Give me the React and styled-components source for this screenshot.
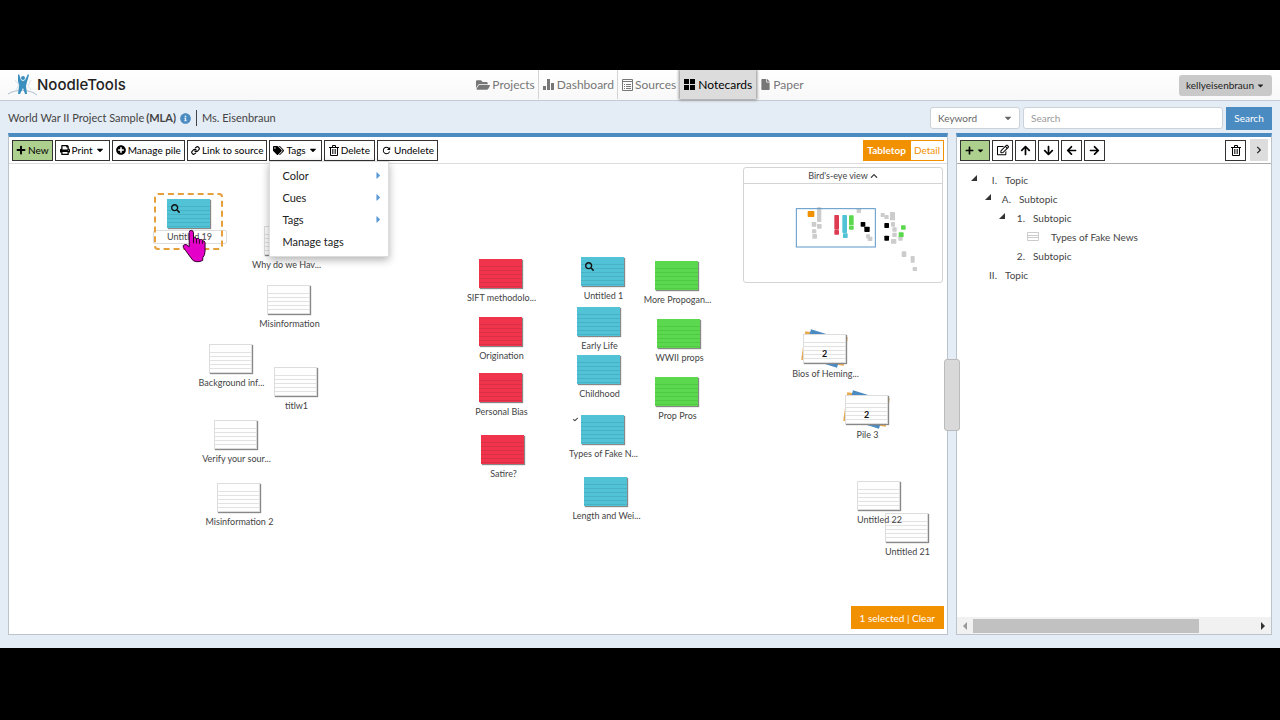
import React from "react";
import styled, { createGlobalStyle, css } from "styled-components";
import { FaPlus, FaPrint, FaPlusCircle, FaTags, FaFolderOpen, FaFile, FaInfoCircle, FaArrowUp, FaArrowDown, FaArrowLeft, FaArrowRight, FaRegEdit, FaSearch, FaChevronRight, FaChevronUp, FaCaretDown, FaCaretRight, FaCheck } from "react-icons/fa";
import { FiLink } from "react-icons/fi";
import { MdRefresh } from "react-icons/md";

const blue = "#4a8bc2";
const orange = "#f29100";

const Global = createGlobalStyle`
  *, *::before, *::after { box-sizing: border-box; }
  body { margin: 0; background: #000; font: 10px/16px Lato, sans-serif; color: #444; }
  button, input, select { font: inherit; color: inherit; margin: 0; }
  button { cursor: pointer; }
  svg { flex: none; display: block; }
`;

const Letterbox = styled.div`
  min-height: 100vh;
  padding: 70px 0 72px;
  display: flex;
  flex-direction: column;
  background: #000;
`;

const Shell = styled.div`
  flex: 1;
  display: flex;
  flex-direction: column;
  background: #e4edf5;
`;

const Header = styled.header`
  display: grid;
  grid-template-columns: 1fr auto 1fr;
  height: 31px;
  padding: 0 8px;
  background: linear-gradient(#fff, #f8f8f8);
  border-bottom: 1px solid #c3ccd5;
`;

const Brand = styled.a`
  display: flex;
  align-items: center;
  color: #222;
  text-decoration: none;
  font: 500 15px/20px Inter, sans-serif;
`;

const Nav = styled.nav`
  display: flex;
`;

const NavLink = styled.a`
  display: flex;
  align-items: center;
  gap: 2px;
  height: 29px;
  padding: 0 3px 0 4px;
  font-size: 12px;
  color: #777;
  text-decoration: none;
  border-right: 1px solid ${(p) => (p.$divided ? "#d4d4d4" : "transparent")};
  ${(p) => p.$active && css`
    color: #000;
    background: #dcdcdc;
    box-shadow: 0 0 3px 1px #888;
    clip-path: inset(0 -4px -4px -4px);
  `}
`;

const Account = styled.div`
  display: flex;
  justify-content: flex-end;
  align-items: center;
`;

const AccountButton = styled.button`
  display: flex;
  align-items: center;
  gap: 2px;
  height: 21px;
  padding: 0 7px;
  color: #222;
  background: #c9c9c9;
  border: 0;
  border-radius: 3px;
`;

const ProjectBar = styled.div`
  display: flex;
  align-items: center;
  height: 32px;
  padding: 2px 8px 0;
  font-size: 11px;
`;

const ProjectTitle = styled.h1`
  display: flex;
  align-items: center;
  gap: 2px;
  margin: 0;
  font-size: 11px;
  font-weight: 400;
  svg { margin-left: 2px; color: ${blue}; }
`;

const Teacher = styled.span`
  margin-left: 5px;
  padding-left: 5px;
  border-left: 1px solid #444;
`;

const SearchForm = styled.form`
  display: flex;
  gap: 3px;
  margin-left: auto;
  font-size: 10px;
`;

const SelectBox = styled.label`
  display: grid;
  grid-template-columns: 1fr auto;
  align-items: center;
  width: 90px;
  height: 22px;
  padding-right: 6px;
  color: #666;
  background: #fff;
  border: 1px solid #ccd2d8;
  border-radius: 3px;
  select {
    grid-area: 1 / 1 / 2 / 3;
    appearance: none;
    height: 20px;
    padding: 0 7px;
    background: none;
    border: 0;
  }
  svg { grid-area: 1 / 2; pointer-events: none; }
`;

const SearchInput = styled.input`
  width: 200px;
  height: 22px;
  padding: 0 7px;
  background: #fff;
  border: 1px solid #ccd2d8;
  border-radius: 3px;
  &::placeholder { color: #999; }
`;

const SearchButton = styled.button`
  width: 46px;
  height: 23px;
  padding: 0;
  color: #fff;
  background: ${blue};
  border: 0;
`;

const Workspace = styled.main`
  flex: 1;
  display: flex;
  padding: 0 8px 13px;
`;

const Panel = styled.section`
  display: flex;
  flex-direction: column;
  min-width: 0;
  background: #fff;
  border: 1px solid #bcc3cb;
  border-top: 4px solid ${blue};
  flex: ${(p) => (p.$outline ? "0 0 25%" : "1 1 0")};
`;

const Toolbar = styled.div`
  display: flex;
  align-items: center;
  gap: 2px;
  height: 27px;
  padding: 0 3px;
  border-bottom: ${(p) => (p.$dark ? "1px solid #aaa" : "1px solid #ddd")};
`;

const ToolButton = styled.button`
  display: flex;
  align-items: center;
  justify-content: center;
  gap: 2px;
  height: 21px;
  min-width: 21px;
  padding: 0 ${(p) => (p.$wide ? 4 : 3)}px;
  white-space: nowrap;
  color: #000;
  background: ${(p) => (p.$green ? "#aed08e" : "#fff")};
  border: 1px solid #333;
`;

const Spacer = styled.div`
  flex: 1;
`;

const ViewSwitch = styled.div`
  display: flex;
`;

const ViewButton = styled.button`
  height: 21px;
  padding: 0 3px;
  border: 1px solid ${orange};
  font-weight: ${(p) => (p.$on ? 700 : 400)};
  color: ${(p) => (p.$on ? "#fff" : orange)};
  background: ${(p) => (p.$on ? orange : "#fff")};
`;

const MenuAnchor = styled.div`
  position: relative;
`;

const Menu = styled.ul`
  position: absolute;
  z-index: 5;
  top: 21px;
  left: 0;
  width: 120px;
  margin: 0;
  padding: 3px 0;
  list-style: none;
  font-size: 11px;
  background: #fff;
  border: 1px solid #ddd;
  box-shadow: 0 3px 8px rgba(0, 0, 0, 0.3);
`;

const MenuButton = styled.button`
  display: flex;
  align-items: center;
  justify-content: space-between;
  width: 100%;
  height: 22px;
  padding: 0 4px 0 12px;
  color: #222;
  background: none;
  border: 0;
  svg { color: #5b9bd5; }
`;

const Tabletop = styled.div`
  position: relative;
  flex: 1;
  min-height: 470px;
`;

const CardSpot = styled.div`
  position: absolute;
  left: ${(p) => p.$x - 30}px;
  top: ${(p) => p.$y - 164}px;
  display: flex;
  flex-direction: column;
  align-items: center;
  gap: 2px;
  width: 81px;
`;

const paper = { white: ["#fefefe", "#e2e2e2"], red: ["#f0344c", "#d93048"], teal: ["#52c3d6", "#48b2c4"], green: ["#5bd84d", "#52c945"] };

const CardFace = styled.div`
  position: relative;
  width: 43px;
  height: 29px;
  padding: 5px 0 0 4px;
  color: #111;
  border: ${(p) => (p.$color === "white" ? "1px solid #ddd" : "0")};
  box-shadow: 1px 1px 1px #888;
  background: repeating-linear-gradient(${(p) => paper[p.$color][0]} 0 3px, ${(p) => paper[p.$color][1]} 3px 4px) 0 4px / 100% 24px no-repeat, ${(p) => paper[p.$color][0]};
`;

const CardLabel = styled.div`
  height: 16px;
  margin-top: ${(p) => (p.$pile ? 1 : 0)}px;
  padding-left: 2px;
  line-height: 16px;
  font-size: 9px;
  white-space: nowrap;
  color: #444;
`;

const Selection = styled.div`
  position: absolute;
  left: 145px;
  top: 29px;
  width: 69px;
  height: 57px;
  border: 2px dashed #e5a03c;
  border-radius: 4px;
`;

const EditedLabel = styled(CardLabel)`
  width: 74px;
  height: 14px;
  line-height: 12px;
  margin: 0 0 0 2px;
  padding: 0;
  text-align: center;
  background: #fff;
  border: 1px solid #ddd;
  border-radius: 2px;
`;

const PileSheet = styled.div`
  position: absolute;
  left: ${(p) => (p.$narrow ? 22 : 19)}px;
  top: 0;
  width: ${(p) => (p.$narrow ? 36 : 43)}px;
  height: 29px;
  background: ${(p) => p.$color};
  transform: rotate(${(p) => p.$turn}deg);
`;

const PileCount = styled.strong`
  display: block;
  padding: 8px 4px 0 0;
  font-size: 9px;
  line-height: 12px;
  text-align: center;
`;

const TickMark = styled.span`
  position: absolute;
  left: 11px;
  top: 2px;
`;

const BirdsEye = styled.aside`
  position: absolute;
  top: 3px;
  right: 4px;
  width: 200px;
  background: #fff;
  border: 1px solid #d4d4d4;
  border-radius: 3px;
`;

const BirdsEyeToggle = styled.button`
  display: flex;
  align-items: center;
  justify-content: center;
  gap: 2px;
  width: 100%;
  height: 16px;
  padding: 0;
  font-size: 9px;
  background: none;
  border: 0;
  border-bottom: 1px solid #d4d4d4;
`;

const SelectionBadge = styled.button`
  position: absolute;
  right: 3px;
  bottom: 5px;
  height: 23px;
  padding: 0 9px;
  color: #fff;
  background: ${orange};
  border: 0;
`;

const Pointer = styled.svg`
  position: absolute;
  left: 171px;
  top: 65px;
  z-index: 4;
`;

const Gutter = styled.div`
  position: relative;
  width: 8px;
`;

const GutterHandle = styled.button`
  position: absolute;
  z-index: 3;
  left: -4px;
  top: 226px;
  width: 16px;
  height: 72px;
  padding: 0;
  background: #d9d9d9;
  border: 1px solid #bbb;
  border-radius: 3px;
`;

const CollapseButton = styled.button`
  display: flex;
  align-items: center;
  justify-content: center;
  width: 18px;
  height: 22px;
  margin-left: 2px;
  padding: 0;
  color: #222;
  background: #ddd;
  border: 0;
`;

const Outline = styled.ol`
  flex: 1;
  margin: 0;
  padding: 6px 0;
  list-style: none;
`;

const OutlineRow = styled.li`
  display: flex;
  align-items: center;
  height: 19px;
  padding-left: ${(p) => 14 + p.$depth * 14}px;
`;

const Twisty = styled.span`
  width: 8px;
  height: 10px;
`;

const Numeral = styled.span`
  width: ${(p) => (p.$wide ? 24 : 20)}px;
  margin-right: 6px;
  display: flex;
  justify-content: flex-end;
  padding-right: ${(p) => (p.$wide ? 6 : 2)}px;
`;

const ScrollBar = styled.div`
  display: flex;
  align-items: center;
  height: 17px;
  background: #f1f1f1;
`;

const ScrollArrow = styled.button`
  display: flex;
  align-items: center;
  justify-content: center;
  width: 16px;
  height: 17px;
  padding: 0;
  background: none;
  border: 0;
`;

const ScrollTrack = styled.div`
  flex: 1;
`;

const ScrollThumb = styled.div`
  width: 80%;
  height: 14px;
  background: #c1c1c1;
`;

const cards = [
  { x: 266, y: 226, color: "white", label: "Why do we Hav..." },
  { x: 269, y: 285, color: "white", label: "Misinformation" },
  { x: 211, y: 344, color: "white", label: "Background inf..." },
  { x: 276, y: 367, color: "white", label: "titlw1" },
  { x: 216, y: 420, color: "white", label: "Verify your sour..." },
  { x: 219, y: 483, color: "white", label: "Misinformation 2" },
  { x: 481, y: 259, color: "red", label: "SIFT methodolo..." },
  { x: 481, y: 317, color: "red", label: "Origination" },
  { x: 481, y: 373, color: "red", label: "Personal Bias" },
  { x: 483, y: 435, color: "red", label: "Satire?" },
  { x: 583, y: 257, color: "teal", label: "Untitled 1", searched: true },
  { x: 579, y: 307, color: "teal", label: "Early Life" },
  { x: 579, y: 355, color: "teal", label: "Childhood" },
  { x: 583, y: 415, color: "teal", label: "Types of Fake N...", ticked: true },
  { x: 586, y: 477, color: "teal", label: "Length and Wei..." },
  { x: 657, y: 261, color: "green", label: "More Propogan..." },
  { x: 659, y: 319, color: "green", label: "WWII props" },
  { x: 657, y: 377, color: "green", label: "Prop Pros" },
  { x: 805, y: 334, color: "white", label: "Bios of Heming...", count: 2 },
  { x: 847, y: 395, color: "white", label: "Pile 3", count: 2 },
  { x: 887, y: 513, color: "white", label: "Untitled 21" },
  { x: 859, y: 481, color: "white", label: "Untitled 22" },
];

const outline = [
  { depth: 0, mark: "I.", text: "Topic", open: true },
  { depth: 1, mark: "A.", text: "Subtopic", open: true },
  { depth: 2, mark: "1.", text: "Subtopic", open: true },
  { depth: 3, text: "Types of Fake News", card: true },
  { depth: 2, mark: "2.", text: "Subtopic" },
  { depth: 0, mark: "II.", text: "Topic" },
];

const mapMarks = [
  ["#ccc", [[262, 220, 13, 44], [246, 264, 14, 14], [262, 270, 14, 14], [247, 286, 13, 12], [248, 300, 14, 14], [381, 224, 13, 13], [409, 301, 12, 12], [414, 308, 14, 13], [453, 237, 12, 12], [464, 243, 13, 12], [481, 234, 15, 25], [484, 264, 12, 14], [488, 280, 13, 13], [488, 296, 13, 13], [484, 315, 16, 14], [506, 308, 13, 12], [516, 352, 14, 17], [543, 366, 12, 20], [549, 399, 13, 12]]],
  ["#f29100", [[234, 231, 20, 18]]],
  ["#dc3b52", [[314, 243, 14, 44], [314, 288, 14, 14]]],
  ["#52c3d6", [[338, 243, 14, 54], [340, 298, 14, 14]]],
  ["#5bd84d", [[358, 244, 14, 30], [358, 275, 14, 12], [514, 274, 14, 13], [507, 295, 15, 14]]],
  ["#000", [[393, 264, 14, 14], [404, 278, 16, 16], [464, 267, 14, 15], [464, 305, 14, 15]]],
];

function Logo() {
  return (
    <svg width="29" height="24" viewBox="0 0 29 24" fill="none" aria-hidden="true">
      <path d="M0 21c7-5 22-5 29 1" stroke="#aebfce" />
      <circle cx="15" cy="5" r="2" fill="#3b8fbf" />
      <path d="M10 2l1-1 2 6 2 1 2-1 3-6 1 1-2 7-1 4 1 8h-2l-2-6-3 6h-2l1-8-1-5z" fill="#3b8fbf" />
      <path d="M7 7l4 5-3 5M23 7l-3 6 3 4" stroke="#d9e4ec" />
    </svg>
  );
}

const Bars = () => (
  <svg width="12" height="11" viewBox="0 0 12 11" fill="currentColor"><path d="M0 7h3v4H0zM4 0h3v11H4zM8 4h3v7H8z" /></svg>
);
const Tiles = () => (
  <svg width="12" height="11" viewBox="0 0 12 11" fill="currentColor"><path d="M0 0h5v5H0zM6 0h5v5H6zM0 6h5v5H0zM6 6h5v5H6z" /></svg>
);
const ListPage = () => (
  <svg width="11" height="12" viewBox="0 0 11 12" stroke="currentColor" fill="none"><path d="M.5.5h10v11H.5zM.5 2.5h10M2 5.5h1M4 5.5h5M2 7.5h1M4 7.5h5M2 9.5h1M4 9.5h5" /></svg>
);
const Bin = () => (
  <svg width="10" height="11" viewBox="0 0 10 11" stroke="currentColor" fill="none"><path d="M0 2.5h10M3.5 2V.5h3V2M1.5 3v7.5h7V3" /><path d="M3.5 4v5M5 4v5M6.5 4v5" strokeWidth=".7" /></svg>
);

function Card({ card }) {
  return (
    <CardSpot $x={card.x} $y={card.y}>
      {card.count && (
        <>
          <PileSheet $color="#eba94e" $turn={8} />
          <PileSheet $narrow $color="#4a8bc2" $turn={17} />
        </>
      )}
      <CardFace $color={card.color}>
        {card.searched && <FaSearch size={9} />}
        {card.count && <PileCount>{card.count}</PileCount>}
      </CardFace>
      {card.ticked && <TickMark><FaCheck size={5} /></TickMark>}
      <CardLabel $pile={Boolean(card.count)}>{card.label}</CardLabel>
    </CardSpot>
  );
}

export default function App() {
  return (
    <Letterbox>
      <Global />
      <Shell>
        <Header>
          <Brand href="#"><Logo />NoodleTools</Brand>
          <Nav>
            <NavLink href="#" $divided><FaFolderOpen size={14} />Projects</NavLink>
            <NavLink href="#" $divided><Bars />Dashboard</NavLink>
            <NavLink href="#"><ListPage />Sources</NavLink>
            <NavLink href="#" $active><Tiles />Notecards</NavLink>
            <NavLink href="#"><FaFile size={11} />Paper</NavLink>
          </Nav>
          <Account><AccountButton>kellyeisenbraun <FaCaretDown size={9} /></AccountButton></Account>
        </Header>
        <ProjectBar>
          <ProjectTitle>World War II Project Sample <strong>(MLA)</strong><FaInfoCircle size={11} /></ProjectTitle>
          <Teacher>Ms. Eisenbraun</Teacher>
          <SearchForm onSubmit={(e) => e.preventDefault()}>
            <SelectBox>
              <select aria-label="Search by"><option>Keyword</option></select>
              <FaCaretDown size={10} />
            </SelectBox>
            <SearchInput aria-label="Search" placeholder="Search" />
            <SearchButton>Search</SearchButton>
          </SearchForm>
        </ProjectBar>
        <Workspace>
          <Panel>
            <Toolbar>
              <ToolButton $green><FaPlus size={10} />New</ToolButton>
              <ToolButton $wide><FaPrint size={10} />Print <FaCaretDown size={10} /></ToolButton>
              <ToolButton><FaPlusCircle size={10} />Manage pile</ToolButton>
              <ToolButton><FiLink size={9} strokeWidth={3} />Link to source</ToolButton>
              <MenuAnchor>
                <ToolButton><FaTags size={11} />Tags <FaCaretDown size={10} /></ToolButton>
                <Menu>
                  <li><MenuButton>Color<FaCaretRight size={11} /></MenuButton></li>
                  <li><MenuButton>Cues<FaCaretRight size={11} /></MenuButton></li>
                  <li><MenuButton>Tags<FaCaretRight size={11} /></MenuButton></li>
                  <li><MenuButton>Manage tags</MenuButton></li>
                </Menu>
              </MenuAnchor>
              <ToolButton $wide><Bin />Delete</ToolButton>
              <ToolButton><MdRefresh size={11} />Undelete</ToolButton>
              <Spacer />
              <ViewSwitch>
                <ViewButton $on>Tabletop</ViewButton>
                <ViewButton>Detail</ViewButton>
              </ViewSwitch>
            </Toolbar>
            <Tabletop>
              {cards.map((c) => <Card key={c.label} card={c} />)}
              <CardSpot $x={169} $y={199}>
                <CardFace $color="teal"><FaSearch size={9} /></CardFace>
                <EditedLabel>Untitled 19</EditedLabel>
              </CardSpot>
              <Selection />
              <Pointer width="27" height="35" viewBox="90 122 80 106" aria-hidden="true">
                <path d="M117 133q0-7 6-7t7 7v16q4-3 8 1v2q6-4 10 1v2q6-3 10 1v2q6-1 7 5v26q0 12-7 20v8q-8 5-18 4-12 0-18-12l-16-22q-10-10-7-15 4-5 11-2l7 6z" fill="#e400c8" stroke="#300028" strokeWidth="3" />
                <path d="M130 149v16M139 152v14M148 155v12M157 158v9" fill="none" stroke="#300028" strokeWidth="3" />
              </Pointer>
              <BirdsEye>
                <BirdsEyeToggle>Bird's-eye view <FaChevronUp size={8} /></BirdsEyeToggle>
                <svg width="198" height="98" viewBox="43 150 594 294" aria-hidden="true">
                  {mapMarks.map(([fill, boxes]) => boxes.map(([x, y, w, h]) => (
                    <rect key={`${x}-${y}`} x={x} y={y} width={w} height={h} rx="2" fill={fill} />
                  )))}
                  <rect x="200" y="224" width="237" height="115" fill="none" stroke="#5a96c8" strokeWidth="3" />
                </svg>
              </BirdsEye>
              <SelectionBadge>1 selected | Clear</SelectionBadge>
            </Tabletop>
          </Panel>
          <Gutter><GutterHandle aria-label="Resize panels" /></Gutter>
          <Panel $outline>
            <Toolbar $dark>
              <ToolButton $green $wide aria-label="Add"><FaPlus size={9} /><FaCaretDown size={9} /></ToolButton>
              <ToolButton aria-label="Edit"><FaRegEdit size={12} /></ToolButton>
              <ToolButton aria-label="Move up"><FaArrowUp size={11} /></ToolButton>
              <ToolButton aria-label="Move down"><FaArrowDown size={11} /></ToolButton>
              <ToolButton aria-label="Outdent"><FaArrowLeft size={11} /></ToolButton>
              <ToolButton aria-label="Indent"><FaArrowRight size={11} /></ToolButton>
              <Spacer />
              <ToolButton aria-label="Delete topic"><Bin /></ToolButton>
              <CollapseButton aria-label="Collapse"><FaChevronRight size={8} /></CollapseButton>
            </Toolbar>
            <Outline>
              {outline.map((row, i) => (
                <OutlineRow key={i} $depth={row.depth}>
                  <Twisty>{row.open && <svg width="6" height="6"><path d="M6 0v6H0z" fill="#333" /></svg>}</Twisty>
                  <Numeral $wide={row.card}>
                    {row.mark}
                    {row.card && <svg width="12" height="9" stroke="#ccc" fill="none"><path d="M.5.5h11v8H.5zM1 3.5h10M1 5.5h10" /></svg>}
                  </Numeral>
                  {row.text}
                </OutlineRow>
              ))}
            </Outline>
            <ScrollBar>
              <ScrollArrow aria-label="Scroll left"><svg width="4" height="8"><path d="M4 0v8L0 4z" fill="#999" /></svg></ScrollArrow>
              <ScrollTrack><ScrollThumb /></ScrollTrack>
              <ScrollArrow aria-label="Scroll right"><svg width="4" height="8"><path d="M0 0v8l4-4z" fill="#333" /></svg></ScrollArrow>
            </ScrollBar>
          </Panel>
        </Workspace>
      </Shell>
    </Letterbox>
  );
}
